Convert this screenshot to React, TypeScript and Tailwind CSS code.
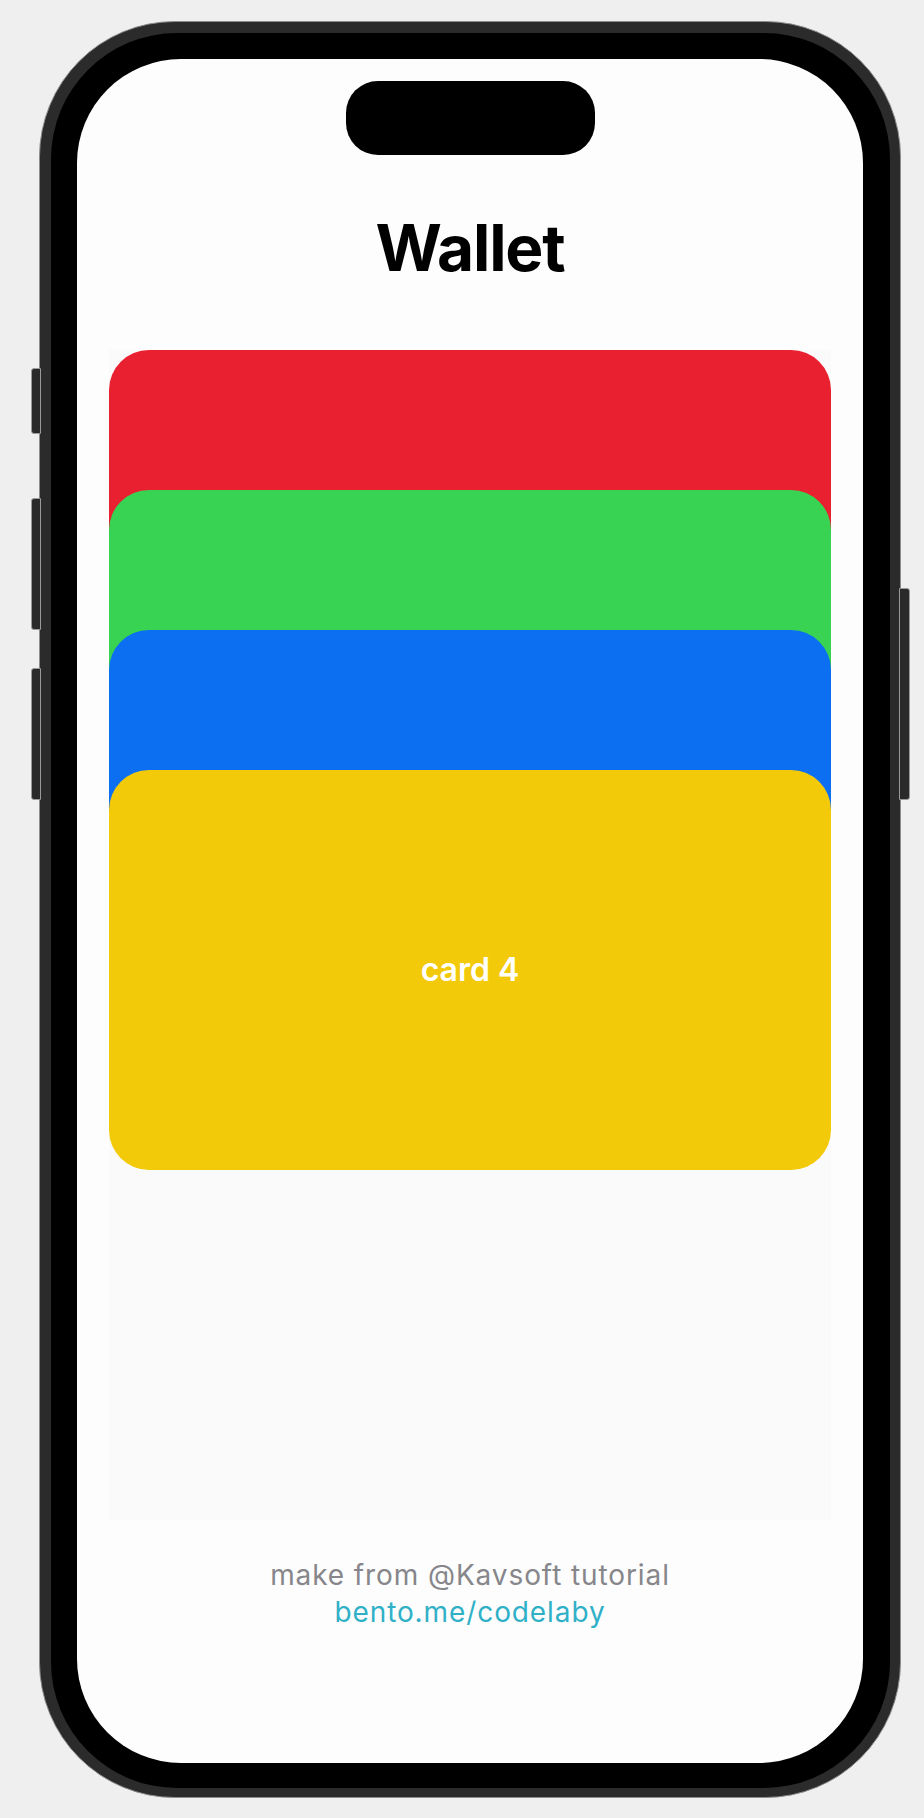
const cards = [
  { id: 1, label: "card 1", color: "bg-[#e8202f]" },
  { id: 2, label: "card 2", color: "bg-[#39d353]" },
  { id: 3, label: "card 3", color: "bg-[#0c6ff1]" },
  { id: 4, label: "card 4", color: "bg-[#f3ca0a]" },
];

const buttonStyle = "border border-[#9a9a9a] bg-[#2a2a2a]";

function SideButtons() {
  return (
    <>
      <div className="absolute -left-[9px] top-[346px] flex flex-col">
        <div className={`h-[66px] w-[10px] rounded-l-[3px] ${buttonStyle}`} />
        <div className={`mt-[64px] h-[132px] w-[10px] rounded-l-[3px] ${buttonStyle}`} />
        <div className={`mt-[38px] h-[132px] w-[10px] rounded-l-[3px] ${buttonStyle}`} />
      </div>
      <div className={`absolute -right-[10px] top-[566px] h-[212px] w-[11px] rounded-r-[3px] ${buttonStyle}`} />
    </>
  );
}

function CardStack() {
  return (
    <div className="mt-[70px] flex h-[1170px] w-[722px] flex-col bg-[#fafafa]">
      {cards.map((card, i) => (
        <div
          key={card.id}
          className={`flex h-[400px] shrink-0 items-center justify-center rounded-[40px] ${card.color} ${
            i > 0 ? "-mt-[260px]" : ""
          }`}
        >
          {i === cards.length - 1 && (
            <span className="text-[32px] font-semibold leading-none text-white">
              {card.label}
            </span>
          )}
        </div>
      ))}
    </div>
  );
}

export default function App() {
  return (
    <div
      className="min-h-screen bg-[#efefef] pl-[39px] pt-[21px]"
      style={{ fontFamily: "Inter, 'Noto Sans', sans-serif" }}
    >
      <div className="relative h-[1777px] w-[862px] rounded-[136px] border border-[#8c8c8c] bg-[#2b2b2b] pb-[9px] pl-[11px] pr-[10px] pt-[11px]">
        <SideButtons />
        <div className="h-full rounded-[126px] bg-black pb-[25px] pl-[26px] pr-[27px] pt-[26px]">
          <div className="flex h-full flex-col items-center overflow-hidden rounded-[104px] bg-[#fdfdfd]">
            <div className="mt-[22px] h-[74px] w-[249px] shrink-0 rounded-[32px] bg-black" />

            <h1 className="mt-[61px] text-[64px] font-bold leading-[64px] tracking-[-1.2px] text-black">
              Wallet
            </h1>

            <CardStack />

            <div className="mt-[37px] flex flex-col items-center text-[28px] leading-[37px] tracking-[0.9px]">
              <p className="text-[#86868b]">make from @Kavsoft tutorial</p>
              <p className="text-[#30b0c7]">bento.me/codelaby</p>
            </div>
          </div>
        </div>
      </div>
    </div>
  );
}
